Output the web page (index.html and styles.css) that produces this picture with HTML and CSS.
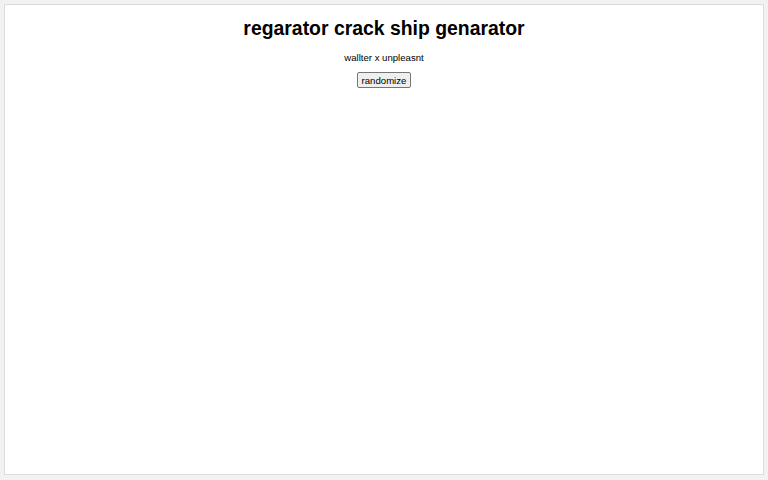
FILE: index.html
```html
<!DOCTYPE html>
<html>
<head>
  <title>regarator crack ship genarator</title>
  <link rel="stylesheet" href="styles.css">
</head>
<body>
  <div class="page">
    <h1 class="title">regarator crack ship genarator</h1>
    <p class="ship" id="ship">wallter x unpleasnt</p>
    <button class="button" onclick="randomize()">randomize</button>
  </div>

  <script>
    const names = ['wallter', 'unpleasnt', 'regarator', 'jessi', 'gus', 'sal'];

    // Pick two different names
    function randomize() {
      const a = names[Math.floor(Math.random() * names.length)];
      let b = a;
      while (b === a) {
        b = names[Math.floor(Math.random() * names.length)];
      }
      document.getElementById('ship').textContent = a + ' x ' + b;
    }
  </script>
</body>
</html>
```

FILE: styles.css
```css
* {
  box-sizing: border-box;
}

body {
  margin: 0;
  padding: 4px 4px 5px;
  height: 100vh;
  background: #f2f2f2;
  font-family: "Liberation Sans", Arial, sans-serif;
}

.page {
  height: 100%;
  background: #fff;
  border: 1px solid #dcdcdc;
  display: flex;
  flex-direction: column;
  align-items: center;
  padding-top: 12px;
}

.title {
  margin: 0;
  font-size: 19.4px;
  font-weight: bold;
  color: #000;
}

.ship {
  margin: 12px 0 0;
  font-size: 9.6px;
  color: #000;
}

.button {
  margin-top: 9px;
  font-family: "Liberation Sans", Arial, sans-serif;
  font-size: 9.6px;
  padding: 2px 4px 1px;
  background: #efefef;
  border: 1px solid #767676;
  border-radius: 2px;
  color: #000;
}
```
